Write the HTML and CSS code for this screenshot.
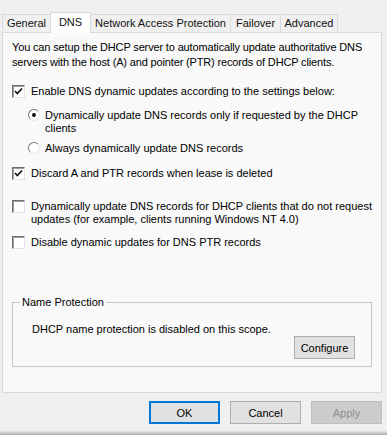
FILE: index.html
```html
<!DOCTYPE html>
<html>
<head>
<meta charset="utf-8">
<link rel="stylesheet" href="styles.css">
</head>
<body>
<div class="dialog">
  <div class="tabs">
    <div class="tab t-general">General</div>
    <div class="tab t-dns active">DNS</div>
    <div class="tab t-nap">Network Access Protection</div>
    <div class="tab t-fail">Failover</div>
    <div class="tab t-adv">Advanced</div>
  </div>
  <div class="panel">
    <p class="intro">You can setup the DHCP server to automatically update authoritative DNS servers with the host (A) and pointer (PTR) records of DHCP clients.</p>
    <div class="opt o1">
      <span class="cb"><svg width="9" height="9" viewBox="0 0 9 9"><path d="M1 4 L3.3 6.5 L8 1.5" fill="none" stroke="#111" stroke-width="1.7"/></svg></span>
      <span class="lbl">Enable DNS dynamic updates according to the settings below:</span>
    </div>
    <div class="opt radio-opt o2">
      <span class="rb on"></span>
      <span class="lbl">Dynamically update DNS records only if requested by the DHCP clients</span>
    </div>
    <div class="opt radio-opt o3">
      <span class="rb"></span>
      <span class="lbl">Always dynamically update DNS records</span>
    </div>
    <div class="opt o4">
      <span class="cb"><svg width="9" height="9" viewBox="0 0 9 9"><path d="M1 4 L3.3 6.5 L8 1.5" fill="none" stroke="#111" stroke-width="1.7"/></svg></span>
      <span class="lbl">Discard A and PTR records when lease is deleted</span>
    </div>
    <div class="opt o5">
      <span class="cb"></span>
      <span class="lbl">Dynamically update DNS records for DHCP clients that do not request updates (for example, clients running Windows NT 4.0)</span>
    </div>
    <div class="opt o6">
      <span class="cb"></span>
      <span class="lbl">Disable dynamic updates for DNS PTR records</span>
    </div>
    <fieldset class="group">
      <legend>Name Protection</legend>
      <p class="gtext">DHCP name protection is disabled on this scope.</p>
      <div class="grow"><button class="btn cfg">Configure</button></div>
    </fieldset>
  </div>
  <div class="footer">
    <button class="btn wide default">OK</button>
    <button class="btn wide">Cancel</button>
    <button class="btn wide disabled">Apply</button>
  </div>
</div>
<div class="edge"></div>
</body>
</html>
```
FILE: styles.css
```css
html, body {
  margin: 0;
  padding: 0;
  background: #f0f0f0;
}
body {
  font-family: "Liberation Sans", Arial, sans-serif;
  font-size: 11px;
  color: #000;
  width: 387px;
  height: 435px;
  overflow: hidden;
  display: flex;
  flex-direction: column;
}
.dialog {
  padding: 12px 0 0 2px;
  display: flex;
  flex-direction: column;
  flex: 1;
}
.tabs {
  display: flex;
  height: 20px;
  align-items: flex-end;
  position: relative;
  z-index: 1;
}
.tab {
  height: 18px;
  line-height: 17px;
  border: 1px solid #dadada;
  border-bottom: none;
  margin-right: -1px;
  box-sizing: border-box;
  background: #f0f0f0;
  color: #111;
  text-align: center;
}
.t-general { width: 49px; }
.t-dns { width: 41px; }
.t-nap { width: 141px; }
.t-fail { width: 51px; }
.t-adv { width: 58px; }
.tab.active {
  height: 21px;
  background: #ffffff;
  line-height: 18px;
  margin-bottom: -1px;
}
.panel {
  border: 1px solid #dadada;
  background: #f9f9f9;
  width: 380px;
  height: 361px;
  box-sizing: border-box;
  padding: 7px 7px 0 9px;
}
.intro {
  margin: 0;
  line-height: 15px;
  width: 362px;
  letter-spacing: -0.15px;
}
.opt {
  display: flex;
  align-items: flex-start;
  line-height: 13px;
}
.o1 { margin-top: 15px; }
.o2 { margin-top: 11px; }
.o3 { margin-top: 7px; }
.o4 { margin-top: 12px; }
.o5 { margin-top: 20px; }
.o6 { margin-top: 10px; }
.radio-opt { padding-left: 16px; }
.cb {
  width: 13px;
  height: 13px;
  border: 1px solid;
  border-color: #6f6f6f #e3e3e3 #e3e3e3 #6f6f6f;
  background: #fff;
  flex: none;
  box-sizing: border-box;
  margin-right: 6px;
  display: flex;
  align-items: center;
  justify-content: center;
  box-shadow: inset 1px 1px 0 #a0a0a0;
}
.rb {
  width: 12px;
  height: 12px;
  border: 1px solid;
  border-color: #7a7a7a #e6e6e6 #e6e6e6 #7a7a7a;
  border-radius: 50%;
  background: #fff;
  flex: none;
  box-sizing: border-box;
  margin-right: 5px;
  display: flex;
  align-items: center;
  justify-content: center;
}
.rb.on::after {
  content: "";
  width: 4px;
  height: 4px;
  border-radius: 50%;
  background: #111;
}
.lbl { display: block; }
.group {
  margin: 47px 0 0 0;
  border: 1px solid #c6c6c6;
  padding: 0 16px 7px 19px;
  box-sizing: border-box;
  width: 360px;
  min-width: 0;
}
.group legend {
  padding: 0 2px;
  margin-left: -12px;
  line-height: 13px;
}
.gtext {
  margin: 14px 0 0 0;
  line-height: 13px;
}
.grow {
  display: flex;
  justify-content: flex-end;
}
.btn {
  font-family: "Liberation Sans", Arial, sans-serif;
  font-size: 11px;
  height: 23px;
  padding: 0;
  border: 1px solid #adadad;
  background: #e1e1e1;
  color: #000;
  box-sizing: border-box;
}
.btn.cfg { width: 61px; }
.footer {
  display: flex;
  justify-content: flex-end;
  gap: 10px;
  margin-top: 8px;
  width: 380px;
}
.btn.wide { width: 71px; }
.btn.default {
  border: 2px solid #0078d7;
}
.btn.disabled {
  background: #cccccc;
  border-color: #bfbfbf;
  color: #8d8d8d;
}
.edge {
  height: 4px;
  background: linear-gradient(#e6e6e6, #a9a9a9);
}
```
